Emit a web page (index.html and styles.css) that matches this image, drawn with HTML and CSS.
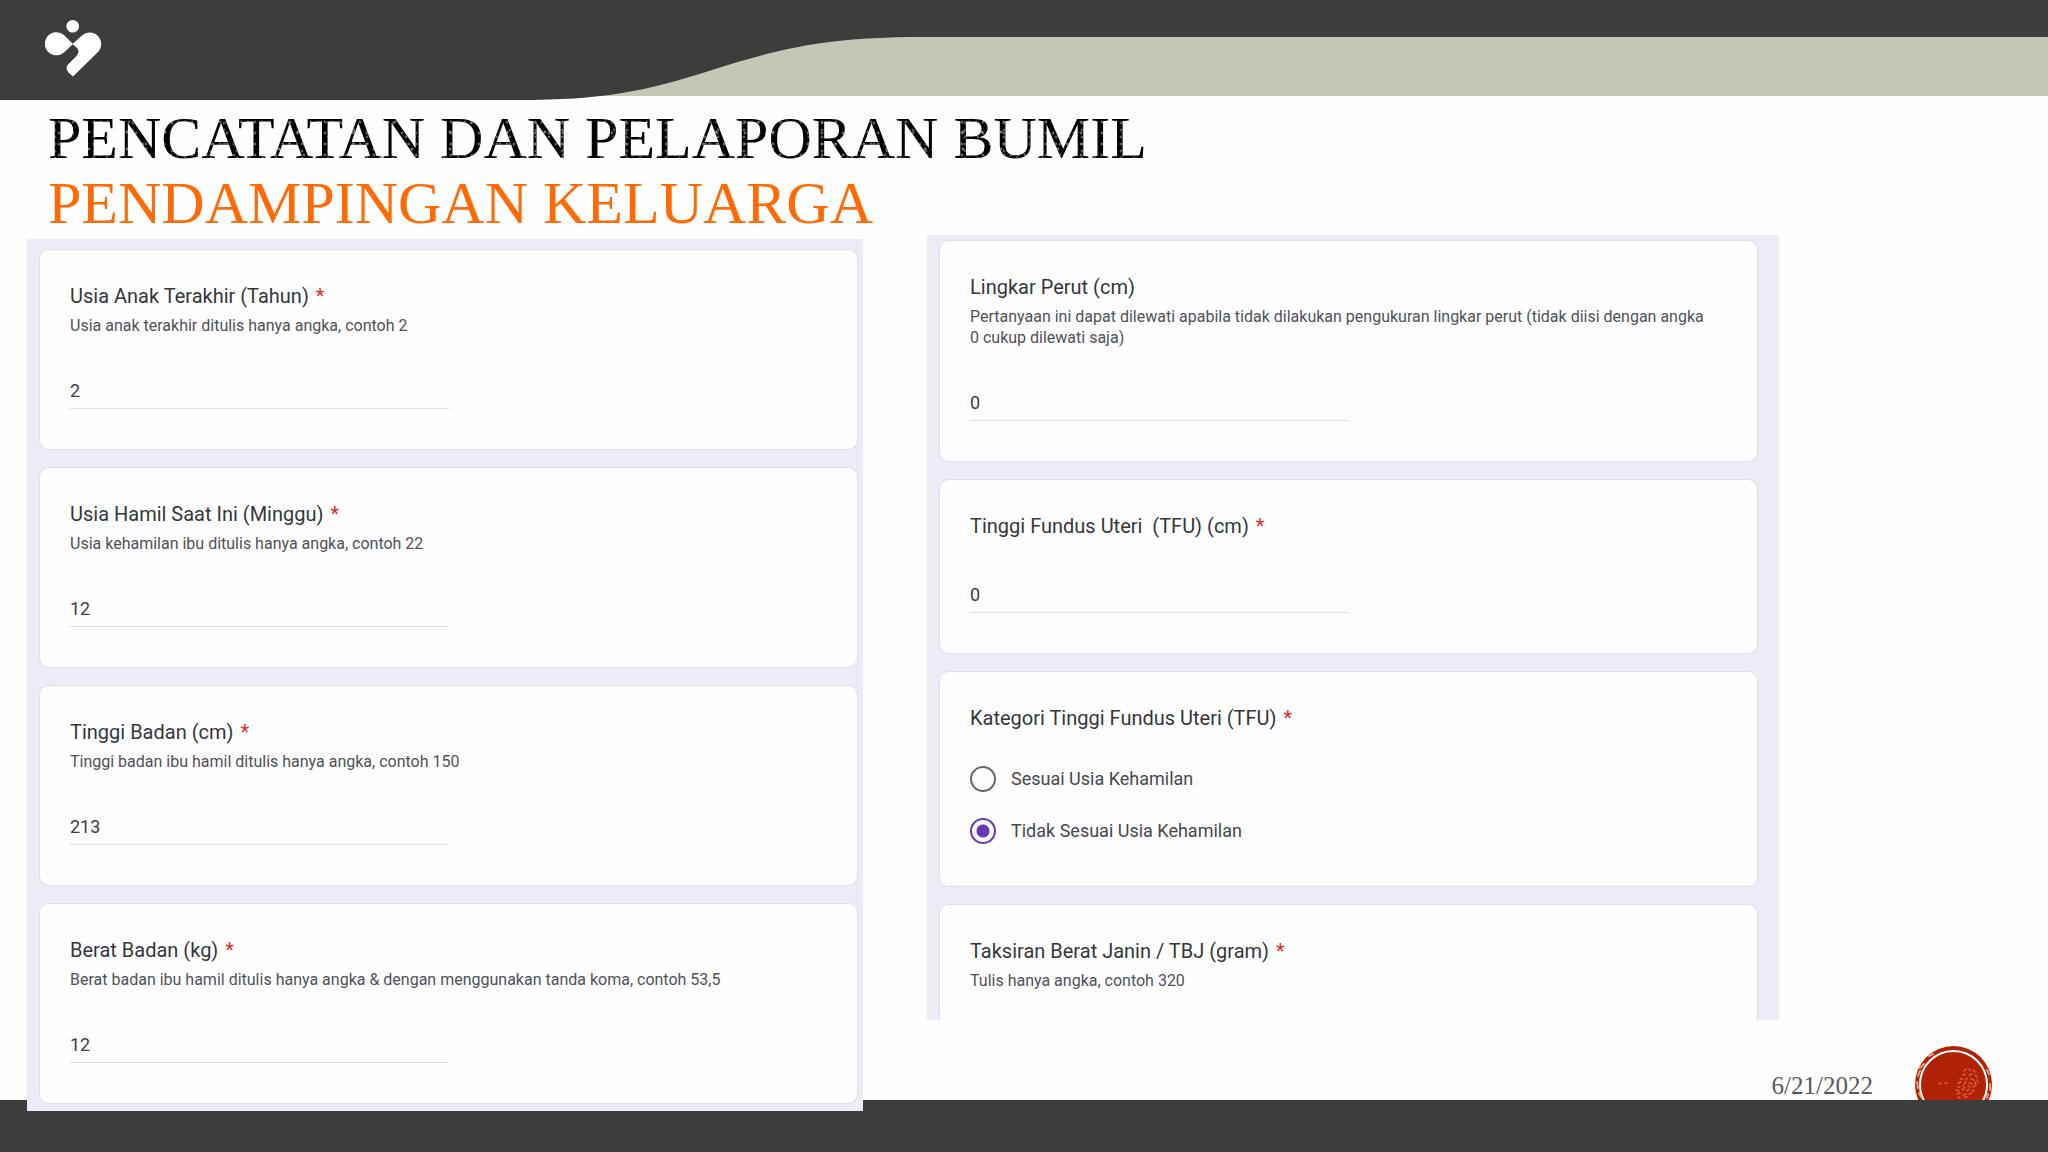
FILE: index.html
```html
<!DOCTYPE html>
<html lang="id">
<head>
<meta charset="utf-8">
<meta name="viewport" content="width=device-width, initial-scale=1">
<title>Pencatatan dan Pelaporan Bumil</title>
<link rel="stylesheet" href="styles.css">
</head>
<body>
<div class="slide">
  <header class="banner">
    <svg class="banner-shape" viewBox="0 0 2048 100" preserveAspectRatio="none" aria-hidden="true">
      <path d="M590 96H2048V30H590Z" fill="#c4c7b5"/>
      <path d="M0 0H2048V37H920C830 37 780 48 712 70S600 100 520 100H0Z" fill="#3d3d3d"/>
    </svg>
    <svg class="logo" viewBox="0 0 60 60" role="img" aria-label="Logo">
      <g fill="#fff">
        <circle cx="27.700" cy="6.300" r="6.300"/>
        <path d="M28 24L19 15A11.600 11.600 0 1 0 19 32.500Z"/>
        <path d="M27.500 24L37 15.500A11.500 11.500 0 0 1 53 32L28 56.500L23.500 52.500Q19.500 48 23.500 44L31 36.500Q35.500 31.500 32 28Z"/>
      </g>
    </svg>
  </header>

  <h1 class="heading">
    <span class="heading-main">PENCATATAN DAN PELAPORAN BUMIL</span>
    <span class="heading-sub">PENDAMPINGAN KELUARGA</span>
  </h1>

  <main class="content">
    <form class="panel panel-left">
      <section class="card">
        <label class="question" for="usia-anak">Usia Anak Terakhir (Tahun) <span class="required">*</span></label>
        <p class="hint">Usia anak terakhir ditulis hanya angka, contoh 2</p>
        <input class="answer" id="usia-anak" type="text" value="2">
      </section>
      <section class="card">
        <label class="question" for="usia-hamil">Usia Hamil Saat Ini (Minggu) <span class="required">*</span></label>
        <p class="hint">Usia kehamilan ibu ditulis hanya angka, contoh 22</p>
        <input class="answer" id="usia-hamil" type="text" value="12">
      </section>
      <section class="card">
        <label class="question" for="tinggi">Tinggi Badan (cm) <span class="required">*</span></label>
        <p class="hint">Tinggi badan ibu hamil ditulis hanya angka, contoh 150</p>
        <input class="answer" id="tinggi" type="text" value="213">
      </section>
      <section class="card">
        <label class="question" for="berat">Berat Badan (kg) <span class="required">*</span></label>
        <p class="hint">Berat badan ibu hamil ditulis hanya angka &amp; dengan menggunakan tanda koma, contoh 53,5</p>
        <input class="answer" id="berat" type="text" value="12">
      </section>
    </form>

    <div class="side">
      <form class="panel panel-right">
        <section class="card">
          <label class="question" for="perut">Lingkar Perut (cm)</label>
          <p class="hint">Pertanyaan ini dapat dilewati apabila tidak dilakukan pengukuran lingkar perut (tidak diisi dengan angka 0&nbsp;cukup dilewati saja)</p>
          <input class="answer" id="perut" type="text" value="0">
        </section>
        <section class="card">
          <label class="question" for="tfu">Tinggi Fundus Uteri &nbsp;(TFU) (cm) <span class="required">*</span></label>
          <input class="answer" id="tfu" type="text" value="0">
        </section>
        <fieldset class="card card-choices">
          <legend class="question">Kategori Tinggi Fundus Uteri (TFU) <span class="required">*</span></legend>
          <div class="choices">
            <label class="choice"><input type="radio" name="kategori"> Sesuai Usia Kehamilan</label>
            <label class="choice"><input type="radio" name="kategori" checked> Tidak Sesuai Usia Kehamilan</label>
          </div>
        </fieldset>
        <section class="card card-open">
          <span class="question">Taksiran Berat Janin / TBJ (gram) <span class="required">*</span></span>
          <p class="hint">Tulis hanya angka, contoh 320</p>
        </section>
      </form>
      <div class="meta">
        <time datetime="2022-06-21">6/21/2022</time>
        <svg class="seal" viewBox="0 0 77 54" aria-hidden="true">
          <circle cx="38.500" cy="38.500" r="38.500" fill="#b02203"/>
          <circle cx="38.500" cy="38.500" r="33.500" fill="none" stroke="#fff" stroke-width="2"/>
          <g fill="none" stroke="#d9603f" stroke-linecap="round">
            <path d="M49 25l2-2m3 0l1 2m3-1l2 2m-12 3l2-1m4 1l3-1m3 1l2 2m-17 2l3 0m3 1l1-2m4 1l3 1m3 0l1 2m-20 1l3-1m3 2l2-2m3 1l3 1m3-2l1 3m-18 2l2 0m3-1l2 2m3-2l2 1m3 0l2-1m-19 4l3 1m3-2l2 1m3 1l2-2m3 1l2 1m-17 3l3-1m3 2l3-1m3 0l3-1m-14 4l2 1m4-1l3 0m-28-13l2-1m4 0l2 0" stroke-width="1.500"/>
            <path d="M5 22l4-4m-6 12l2-5M2 36l1 6m1 5l2 4M14 10l4-2M74 28l-2-4m3 14v6m-2 4l-1 4" stroke="#ee9a80" stroke-width="2"/>
          </g>
        </svg>
      </div>
    </div>
  </main>

  <footer class="base"></footer>
</div>
</body>
</html>
```
FILE: styles.css
```css
* {
  box-sizing: border-box;
}

body {
  margin: 0;
  background: #fefefe;
  color: #35363a;
  font-family: Roboto, "Liberation Sans", sans-serif;
}

.slide {
  display: flex;
  flex-direction: column;
  min-height: 100vh;
}

/* Banner */
.banner {
  position: relative;
  height: 100px;
}

.banner-shape {
  display: block;
  width: 100%;
  height: 100%;
}

.logo {
  position: absolute;
  left: 45px;
  top: 20px;
  width: 60px;
  height: 60px;
}

/* Heading */
.heading {
  margin: 0;
  padding: 6px 48px 0;
  font-family: "Liberation Serif", serif;
  font-size: 60px;
  font-weight: 400;
  line-height: 65px;
  margin-bottom: -1px;
}

.heading span {
  display: block;
}

/* Worn-ink speckle clipped to the letters */
.heading-main {
  width: fit-content;
  color: transparent;
  background:
    radial-gradient(circle at 4px 5px, #999 0, transparent 2px) 0 0 / 7px 11px,
    radial-gradient(circle at 7px 3px, #888 0, transparent 2px) 0 0 / 13px 7px,
    radial-gradient(circle at 3px 9px, #bbb 0, transparent 2px) 0 0 / 19px 17px,
    #000;
  background-clip: text;
  -webkit-background-clip: text;
}

.heading-sub {
  color: #ff6a05;
}

/* Form panels */
.content {
  display: grid;
  flex: 1;
  grid-template-columns: minmax(0, 836fr) minmax(0, 1121fr);
  gap: 64px;
  padding-left: 27px;
}

.panel {
  display: flex;
  flex-direction: column;
  gap: 17px;
  background: #eeebf7;
}

.panel-left {
  position: relative;
  margin: 4px 0 -11px;
  padding: 10px 5px 7px 12px;
}

.panel-right {
  width: 76%;
  padding: 5px 21px 0 12px;
}

.card {
  display: flex;
  flex-direction: column;
  align-items: flex-start;
  min-width: 0;
  margin: 0;
  padding: 32px 30px 40px;
  border: 1px solid #e0dde8;
  border-radius: 10px;
  background: #fefefe;
}

.question {
  padding: 0;
  font-size: 20px;
  line-height: 28px;
}

.required {
  margin-left: 2px;
  color: #d93025;
}

.hint {
  margin: 5px 0 0;
  color: #505156;
  font-size: 16px;
  line-height: 21px;
}

.answer {
  width: 50%;
  height: 33px;
  margin-top: 40px;
  padding: 0 0 4px;
  border: 0;
  border-bottom: 1px solid #dedde2;
  background: none;
  color: #3c3d40;
  font-family: inherit;
  font-size: 18px;
}

.card-choices {
  display: block;
  padding-bottom: 42px;
}

.card-choices .question {
  float: left;
}

.choices {
  display: grid;
  gap: 26px;
  clear: both;
  padding-top: 34px;
}

.choice {
  display: flex;
  align-items: center;
  gap: 15px;
  color: #46474b;
  font-size: 18px;
  line-height: 26px;
}

.choice input {
  width: 26px;
  height: 26px;
  margin: 0;
  border: 2px solid #66676a;
  border-radius: 50%;
  appearance: none;
}

.choice input:checked {
  border-color: #673ab7;
  background: radial-gradient(circle, #673ab7 0 6px, transparent 7px);
}

.card-open {
  padding-bottom: 29px;
  border-bottom: 0;
  border-radius: 10px 10px 0 0;
}

/* Date and seal */
.side {
  display: flex;
  flex-direction: column;
}

.meta {
  display: flex;
  align-items: flex-end;
  justify-content: flex-end;
  gap: 42px;
  margin-top: auto;
  padding-right: 56px;
  color: #595959;
  font-family: "Liberation Serif", serif;
  font-size: 25px;
  line-height: 28px;
}

.seal {
  width: 77px;
  height: 54px;
}

.base {
  height: 52px;
  background: #3d3d3d;
}
```
